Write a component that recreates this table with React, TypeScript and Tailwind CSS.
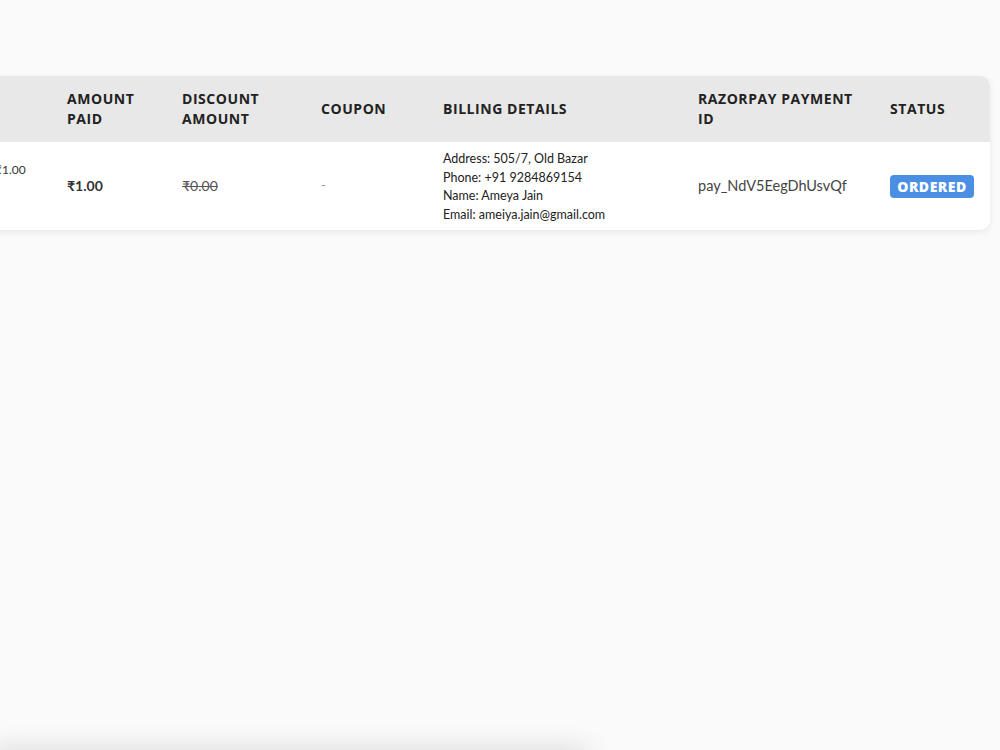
import React from "react";

const head = "font-['Open_Sans',sans-serif] text-[14px] font-bold tracking-[0.55px] leading-[20px] text-[#222] uppercase";

export default function App() {
  return (
    <div className="relative h-[750px] w-[1000px] overflow-hidden bg-[#fafafa] font-['Lato',sans-serif]">
      <div className="mt-[76px] ml-[-30px] w-[1020px] overflow-hidden rounded-[10px] bg-white shadow-[0_2px_6px_rgba(0,0,0,0.08)]">
        {/* header */}
        <div className="flex h-[66px] items-center bg-[#e8e8e8]">
          <div className="w-[73px] pl-6" />
          <div className={`w-[115px] pl-6 ${head}`}>Amount<br />Paid</div>
          <div className={`w-[139px] pl-6 ${head}`}>Discount<br />Amount</div>
          <div className={`w-[122px] pl-6 ${head}`}>Coupon</div>
          <div className={`w-[255px] pl-6 ${head}`}>Billing Details</div>
          <div className={`w-[192px] pl-6 ${head}`}>Razorpay Payment<br />ID</div>
          <div className={`w-[124px] pl-6 ${head}`}>Status</div>
        </div>
        {/* row */}
        <div className="flex h-[88px] items-center pb-[1px]">
          <div className="w-[73px] self-start pt-[19px] pl-[25px] text-[12px] leading-[18px] text-[#333]">₹1.00</div>
          <div className="w-[115px] pl-6 text-[14px] font-bold text-[#333]">₹1.00</div>
          <div className="w-[139px] pl-6 text-[14px] text-[#555] line-through">₹0.00</div>
          <div className="w-[122px] pl-6 text-[13px] text-[#999]">-</div>
          <div className="w-[255px] pl-6 pt-[3px] text-[12.5px] leading-[18.5px] text-[#222]">
            <div>Address: 505/7, Old Bazar</div>
            <div>Phone: +91 9284869154</div>
            <div>Name: Ameya Jain</div>
            <div>Email: ameiya.jain@gmail.com</div>
          </div>
          <div className="w-[192px] pl-6 text-[14.5px] text-[#444]">pay_NdV5EegDhUsvQf</div>
          <div className="w-[124px] pl-6">
            <span className="inline-flex h-[23px] w-[84px] items-center justify-center rounded-[4px] bg-[#4a8fe3] font-['Open_Sans',sans-serif] text-[14px] font-extrabold tracking-[0.5px] text-white">
              ORDERED
            </span>
          </div>
        </div>
      </div>
      <div className="absolute left-0 top-[758px] h-[40px] w-[580px] bg-white shadow-[0_0_28px_8px_rgba(0,0,0,0.14)]" />
    </div>
  );
}
